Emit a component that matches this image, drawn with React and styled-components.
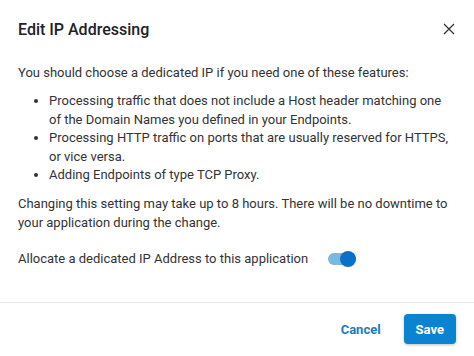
import React, { useState } from 'react';
import styled, { createGlobalStyle } from 'styled-components';

const GlobalStyle = createGlobalStyle`
  html, body {
    margin: 0;
    padding: 0;
    background: #ffffff;
  }
  body {
    font-family: Roboto, "Liberation Sans", sans-serif;
    color: #333333;
  }
`;

const Dialog = styled.div`
  width: 474px;
  height: 356px;
  background: #ffffff;
  display: flex;
  flex-direction: column;
`;

const Header = styled.div`
  display: flex;
  align-items: center;
  justify-content: space-between;
  padding: 12px 13px 0 18px;
  height: 34px;
`;

const Title = styled.h2`
  margin: 0;
  font-size: 16px;
  font-weight: 500;
  color: #222222;
`;

const CloseButton = styled.button`
  border: none;
  background: none;
  padding: 0;
  width: 24px;
  height: 24px;
  display: flex;
  align-items: center;
  justify-content: center;
  cursor: pointer;
`;

const Body = styled.div`
  flex: 1;
  padding: 18px 18px 0 18px;
  font-size: 13px;
  line-height: 18.4px;
  color: #333333;
`;

const Paragraph = styled.p`
  margin: 0 0 ${p => p.gap || 10}px 0;
`;

const List = styled.ul`
  margin: 0 0 11px 0;
  padding-left: 31px;

  li {
    margin: 0;
  }
`;

const ToggleRow = styled.label`
  display: flex;
  align-items: center;
  gap: 20px;
  cursor: pointer;
`;

const Track = styled.span`
  position: relative;
  width: 28px;
  height: 12px;
  border-radius: 6px;
  background: ${p => (p.on ? '#7ab8e4' : '#bdbdbd')};
`;

const Knob = styled.span`
  position: absolute;
  top: -2px;
  left: ${p => (p.on ? '12px' : '-2px')};
  width: 16px;
  height: 16px;
  border-radius: 50%;
  background: ${p => (p.on ? '#0b70c7' : '#f5f5f5')};
`;

const Footer = styled.div`
  border-top: 1px solid #ebebeb;
  display: flex;
  justify-content: flex-end;
  align-items: center;
  gap: 15px;
  padding: 11px 18px 12px 18px;
`;

const Button = styled.button`
  font-family: Roboto, "Liberation Sans", sans-serif;
  font-size: 13px;
  font-weight: 700;
  border: none;
  border-radius: 4px;
  height: 30px;
  padding: 0 ${p => (p.primary ? 12 : 8)}px;
  cursor: pointer;
  color: ${p => (p.primary ? '#ffffff' : '#1a7cc0')};
  background: ${p => (p.primary ? '#0a84d0' : 'transparent')};
  box-shadow: ${p => (p.primary ? '0 1px 3px rgba(0,0,0,0.25)' : 'none')};
`;

export default function App() {
  const [on, setOn] = useState(true);

  return (
    <>
      <GlobalStyle />
      <Dialog>
        <Header>
          <Title>Edit IP Addressing</Title>
          <CloseButton aria-label="Close">
            <svg width="12" height="12" viewBox="0 0 12 12">
              <path d="M1 1L11 11M11 1L1 11" stroke="#333" strokeWidth="1.3" />
            </svg>
          </CloseButton>
        </Header>
        <Body>
          <Paragraph>You should choose a dedicated IP if you need one of these features:</Paragraph>
          <List>
            <li>Processing traffic that does not include a Host header matching one of the Domain Names you defined in your Endpoints.</li>
            <li>Processing HTTP traffic on ports that are usually reserved for HTTPS, or vice versa.</li>
            <li>Adding Endpoints of type TCP Proxy.</li>
          </List>
          <Paragraph gap={18}>
            Changing this setting may take up to 8 hours. There will be no downtime to your application during the change.
          </Paragraph>
          <ToggleRow onClick={() => setOn(!on)}>
            Allocate a dedicated IP Address to this application
            <Track on={on}>
              <Knob on={on} />
            </Track>
          </ToggleRow>
        </Body>
        <Footer>
          <Button>Cancel</Button>
          <Button primary>Save</Button>
        </Footer>
      </Dialog>
    </>
  );
}
